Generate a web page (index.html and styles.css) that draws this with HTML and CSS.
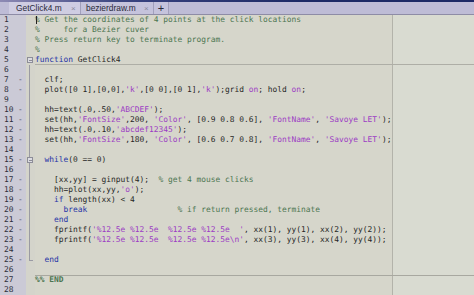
FILE: index.html
```html
<!DOCTYPE html>
<html>
<head>
<meta charset="utf-8">
<link rel="stylesheet" href="styles.css">
</head>
<body>
<div class="app">
  <div class="topstrip"></div>
  <div class="tabbar">
    <div class="tab active"><span class="tname">GetClick4.m</span><span class="tx">×</span></div>
    <div class="tab"><span class="tname">bezierdraw.m</span><span class="tx">×</span></div>
    <div class="tab plus">+</div>
    <div class="tabfill"></div>
  </div>
  <div class="editor">
    <div class="gutter">
      <div class="ln"><span class="n">1</span><span class="d"></span></div>
      <div class="ln"><span class="n">2</span><span class="d"></span></div>
      <div class="ln"><span class="n">3</span><span class="d"></span></div>
      <div class="ln"><span class="n">4</span><span class="d"></span></div>
      <div class="ln"><span class="n">5</span><span class="d"></span></div>
      <div class="ln"><span class="n">6</span><span class="d"></span></div>
      <div class="ln"><span class="n">7</span><span class="d">-</span></div>
      <div class="ln"><span class="n">8</span><span class="d">-</span></div>
      <div class="ln"><span class="n">9</span><span class="d"></span></div>
      <div class="ln"><span class="n">10</span><span class="d">-</span></div>
      <div class="ln"><span class="n">11</span><span class="d">-</span></div>
      <div class="ln"><span class="n">12</span><span class="d">-</span></div>
      <div class="ln"><span class="n">13</span><span class="d">-</span></div>
      <div class="ln"><span class="n">14</span><span class="d"></span></div>
      <div class="ln"><span class="n">15</span><span class="d">-</span></div>
      <div class="ln"><span class="n">16</span><span class="d"></span></div>
      <div class="ln"><span class="n">17</span><span class="d">-</span></div>
      <div class="ln"><span class="n">18</span><span class="d">-</span></div>
      <div class="ln"><span class="n">19</span><span class="d">-</span></div>
      <div class="ln"><span class="n">20</span><span class="d">-</span></div>
      <div class="ln"><span class="n">21</span><span class="d">-</span></div>
      <div class="ln"><span class="n">22</span><span class="d">-</span></div>
      <div class="ln"><span class="n">23</span><span class="d">-</span></div>
      <div class="ln"><span class="n">24</span><span class="d"></span></div>
      <div class="ln"><span class="n">25</span><span class="d">-</span></div>
      <div class="ln"><span class="n">26</span><span class="d"></span></div>
      <div class="ln"><span class="n">27</span><span class="d"></span></div>
      <div class="ln"><span class="n">28</span><span class="d"></span></div>
    </div>
    <div class="folds">
      <div class="f"></div>
      <div class="f"></div>
      <div class="f"></div>
      <div class="f"></div>
      <div class="f box"></div>
      <div class="f v"></div>
      <div class="f v"></div>
      <div class="f v"></div>
      <div class="f v"></div>
      <div class="f v"></div>
      <div class="f v"></div>
      <div class="f v"></div>
      <div class="f v"></div>
      <div class="f v"></div>
      <div class="f box v"></div>
      <div class="f v"></div>
      <div class="f v"></div>
      <div class="f v"></div>
      <div class="f v"></div>
      <div class="f v"></div>
      <div class="f v"></div>
      <div class="f v"></div>
      <div class="f v"></div>
      <div class="f v"></div>
      <div class="f end"></div>
      <div class="f"></div>
      <div class="f"></div>
      <div class="f"></div>
    </div>
    <div class="code">
      <div class="row c"><span class="cursor"></span>% Get the coordinates of 4 points at the click locations</div>
      <div class="row c">%     for a Bezier cuver</div>
      <div class="row c">% Press return key to terminate program.</div>
      <div class="row c">%</div>
      <div class="row fn"><span class="k">function</span> GetClick4</div>
      <div class="row"> </div>
      <div class="row">  clf;</div>
      <div class="row">  plot([0 1],[0,0],<span class="s">'k'</span>,[0 0],[0 1],<span class="s">'k'</span>);grid <span class="s">on</span>; hold <span class="s">on</span>;</div>
      <div class="row"> </div>
      <div class="row">  hh=text(.0,.50,<span class="s">'ABCDEF'</span>);</div>
      <div class="row">  set(hh,<span class="s">'FontSize'</span>,200, <span class="s">'Color'</span>, [0.9 0.8 0.6], <span class="s">'FontName'</span>, <span class="s">'Savoye LET'</span>);</div>
      <div class="row">  hh=text(.0,.10,<span class="s">'abcdef12345'</span>);</div>
      <div class="row">  set(hh,<span class="s">'FontSize'</span>,180, <span class="s">'Color'</span>, [0.6 0.7 0.8], <span class="s">'FontName'</span>, <span class="s">'Savoye LET'</span>);</div>
      <div class="row"> </div>
      <div class="row">  <span class="k">while</span>(0 == 0)</div>
      <div class="row"> </div>
      <div class="row">    [xx,yy] = ginput(4);  <span class="c">% get 4 mouse clicks</span></div>
      <div class="row">    hh=plot(xx,yy,<span class="s">'o'</span>);</div>
      <div class="row">    <span class="k">if</span> length(xx) &lt; 4</div>
      <div class="row">      <span class="k">break</span>                   <span class="c">% if return pressed, terminate</span></div>
      <div class="row">    <span class="k">end</span></div>
      <div class="row">    fprintf(<span class="s">'%12.5e %12.5e  %12.5e %12.5e  '</span>, xx(1), yy(1), xx(2), yy(2));</div>
      <div class="row">    fprintf(<span class="s">'%12.5e %12.5e  %12.5e %12.5e\n'</span>, xx(3), yy(3), xx(4), yy(4));</div>
      <div class="row"> </div>
      <div class="row">  <span class="k">end</span></div>
      <div class="row"> </div>
      <div class="row c sect">%% END</div>
      <div class="row"> </div>
    </div>
  </div>
</div>
</body>
</html>
```
FILE: styles.css
```css
html, body {
  margin: 0;
  padding: 0;
  width: 474px;
  height: 295px;
  overflow: hidden;
  background: #d6d6cb;
}

.app {
  width: 474px;
  height: 295px;
  display: flex;
  flex-direction: column;
  overflow: hidden;
}

.topstrip {
  height: 2px;
  background: linear-gradient(to right, #8d8ab4 0, #3a4480 120px, #1d2a66 300px);
  flex: none;
}

.tabbar {
  height: 12px;
  flex: none;
  display: flex;
  align-items: stretch;
  background: #bebcd6;
  border-bottom: 1px solid #8e8ca6;
  padding-left: 9px;
  font-family: "Liberation Sans", Arial, sans-serif;
  font-size: 8.4px;
  color: #2a2a3a;
}

.tab {
  display: flex;
  align-items: center;
  padding-left: 7px;
  width: 65px;
  border-right: 1px solid #a2a0bc;
  background: #c5c3dc;
  position: relative;
}

.tab.active {
  background: #cfcde2;
  width: 64px;
}

.tab + .tab:not(.plus) {
  padding-left: 5px;
  width: 67px;
}

.tname {
  flex: 1;
  white-space: nowrap;
}

.tx {
  color: #8b8aa0;
  font-size: 8px;
  width: 9px;
}

.tab.plus {
  width: 14px;
  padding-left: 0;
  justify-content: center;
  font-size: 11px;
  line-height: 11px;
  color: #2a2a3a;
}

.tabfill {
  flex: 1;
}

.editor {
  flex: 1;
  display: flex;
  font-family: "DejaVu Sans Mono", "Liberation Mono", monospace;
  font-size: 7.9px;
  line-height: 10px;
}

.gutter {
  width: 26px;
  flex: none;
  background: #cbcad6;
  color: #2e2e3a;
}

.ln {
  height: 10px;
  display: flex;
  padding-left: 4px;
}

.ln .n {
  width: 14px;
}

.ln .d {
  color: #555566;
}

.folds {
  width: 9px;
  flex: none;
  background: #d4d4cb;
}

.f {
  height: 10px;
  position: relative;
}

.f.v::before {
  content: "";
  position: absolute;
  left: 3px;
  top: 0;
  bottom: 0;
  width: 1px;
  background: #9a9aa4;
}

.f.box::after {
  content: "";
  position: absolute;
  left: 1px;
  top: 2px;
  width: 4px;
  height: 4px;
  border: 1px solid #8d8d98;
  background: linear-gradient(#8d8d98, #8d8d98) center / 3px 1px no-repeat, #dcdce2;
}

.f.end::before {
  content: "";
  position: absolute;
  left: 3px;
  top: 0;
  height: 5px;
  width: 1px;
  background: #9a9aa4;
}

.f.end::after {
  content: "";
  position: absolute;
  left: 3px;
  top: 5px;
  width: 4px;
  height: 1px;
  background: #9a9aa4;
}

.code {
  flex: 1;
  color: #262626;
  background: linear-gradient(to right, transparent 357px, #b3b3aa 357px, #b3b3aa 358px, #d9dbd1 358px);
}

.row {
  height: 10px;
  position: relative;
  white-space: pre;
}

.row.fn {
  box-shadow: inset 0 -1px 0 #aeaea6;
}

.row.sect {
  box-shadow: inset 0 1px 0 #a8a8a0;
  font-weight: bold;
}

.k {
  color: #2532a6;
}

.s {
  color: #9c3cc4;
}

.c, .row.c {
  color: #4b7550;
}

.cursor {
  position: absolute;
  left: 1px;
  top: 1px;
  width: 1px;
  height: 8px;
  background: #222;
}
```
